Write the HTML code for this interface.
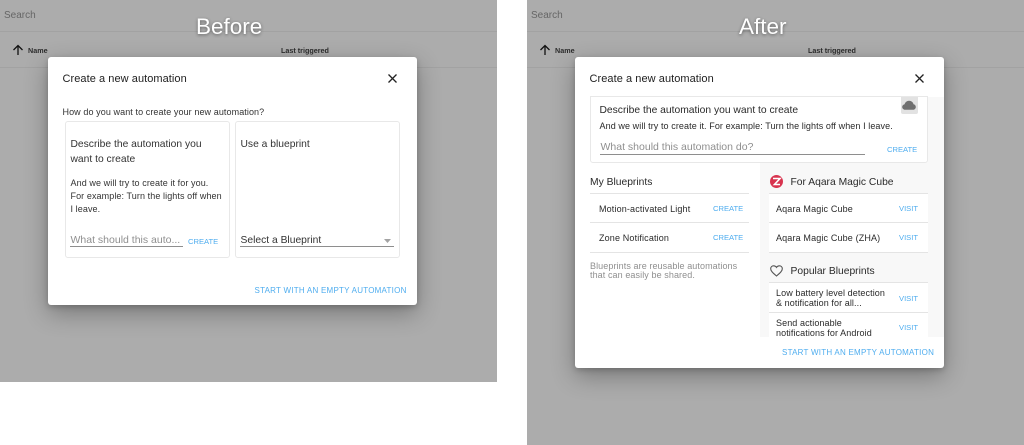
<!DOCTYPE html>
<html><head><meta charset="utf-8">
<style>
html,body{margin:0;padding:0;background:#fff;width:1024px;height:445px;overflow:hidden}
body{position:relative;font-family:"Liberation Sans",sans-serif;color:#212121}
.a{position:absolute}
.t{position:absolute;white-space:nowrap;line-height:14px;height:14px}
.bg{position:absolute;background:#acacac;overflow:hidden}
.hl{position:absolute;height:1px;background:#a2a2a2}
.dlg{position:absolute;background:#fff;border-radius:3px;box-shadow:0 8px 24px rgba(0,0,0,.3),0 2px 6px rgba(0,0,0,.18)}
.card{position:absolute;background:#fff;border:1px solid #e8e8e8;border-radius:3px;box-sizing:border-box}
.title{font-size:11px;letter-spacing:.06px;color:#212121}
.body{font-size:9px;letter-spacing:.09px;color:#333}
.h{font-size:10.3px;letter-spacing:0;color:#333}
.btn{font-size:8px;letter-spacing:.24px;color:#4fade f}
.btn{color:#4fadef}
.sm{font-size:7.6px;letter-spacing:0;color:#4fadef}
.hint{font-size:10.5px;letter-spacing:0;color:#8f8f8f}
.b{font-weight:bold;font-size:7.2px;color:#2c2c2c}
.big{font-size:22.500px;color:#fff;letter-spacing:0;line-height:28px;text-shadow:0 1px 3px rgba(0,0,0,.45);height:28px}
.s{font-size:10px;color:#666}
.line{position:absolute;height:1px;background:#e4e4e4}
.ul{position:absolute;height:1px;background:#8e8e8e}
</style></head><body>

<div class="bg" style="left:0;top:0;width:497px;height:382px"></div>
<div class="bg" style="left:527px;top:0;width:497px;height:445px"></div>
<div class="hl" style="left:0;top:31px;width:497px"></div>
<div class="hl" style="left:0;top:67px;width:497px"></div>
<div class="hl" style="left:527px;top:31px;width:497px"></div>
<div class="hl" style="left:527px;top:67px;width:497px"></div>

<div class="t s" style="left:4px;top:8.500px">Search</div>
<svg class="a" style="left:12px;top:44px" width="12" height="12" viewBox="0 0 12 12"><path d="M6 11V1.500M1.500 6L6 1.500 10.500 6" fill="none" stroke="#111" stroke-width="1.300"/></svg>
<div class="t b" style="left:28px;top:43.500px">Name</div>
<div class="t b" style="left:281px;top:43.500px">Last triggered</div>
<div class="t big" style="left:196px;top:13px">Before</div>

<div class="t s" style="left:531px;top:8.500px">Search</div>
<svg class="a" style="left:539px;top:44px" width="12" height="12" viewBox="0 0 12 12"><path d="M6 11V1.500M1.500 6L6 1.500 10.500 6" fill="none" stroke="#111" stroke-width="1.300"/></svg>
<div class="t b" style="left:555px;top:43.500px">Name</div>
<div class="t b" style="left:808px;top:43.500px">Last triggered</div>
<div class="t big" style="left:739px;top:13px">After</div>

<!-- Before dialog -->
<div class="dlg" style="left:48px;top:57px;width:369px;height:248px"></div>
<div class="t title" style="left:62.500px;top:72px">Create a new automation</div>
<svg class="a" style="left:387px;top:72.500px" width="11" height="11" viewBox="0 0 11 11"><path d="M1.500 1.500L9.500 9.500M9.500 1.500L1.500 9.500" stroke="#222" stroke-width="1.300" fill="none"/></svg>
<div class="t body" style="left:62.500px;top:105px">How do you want to create your new automation?</div>

<div class="card" style="left:65px;top:121px;width:165px;height:137px"></div>
<div class="t h" style="left:70.500px;top:138px">Describe the automation you</div>
<div class="t h" style="left:70.500px;top:153px">want to create</div>
<div class="t body" style="left:70.500px;top:176px">And we will try to create it for you.</div>
<div class="t body" style="left:70.500px;top:188.500px">For example: Turn the lights off when</div>
<div class="t body" style="left:70.500px;top:201.500px">I leave.</div>
<div class="t hint" style="left:70.500px;top:233px">What should this auto...</div>
<div class="ul" style="left:70px;top:246px;width:113px"></div>
<div class="t sm" style="left:188px;top:235px">CREATE</div>

<div class="card" style="left:235px;top:121px;width:165px;height:137px"></div>
<div class="t h" style="left:240.500px;top:138px">Use a blueprint</div>
<div class="t h" style="left:240.500px;top:234px;color:#333">Select a Blueprint</div>
<div class="ul" style="left:240px;top:246px;width:154px"></div>
<svg class="a" style="left:384px;top:239px" width="7" height="4"><path d="M0 0H7L3.500 4Z" fill="#a3a3a3"/></svg>
<div class="t btn" style="left:254.500px;top:283.500px">START WITH AN EMPTY AUTOMATION</div>

<!-- After dialog -->
<div class="dlg" style="left:575px;top:57px;width:369px;height:311px"></div>
<div class="a" style="left:760px;top:97px;width:184px;height:240px;background:#f8f8f8"></div>
<div class="t title" style="left:589.500px;top:72px">Create a new automation</div>
<svg class="a" style="left:914px;top:72.500px" width="11" height="11" viewBox="0 0 11 11"><path d="M1.500 1.500L9.500 9.500M9.500 1.500L1.500 9.500" stroke="#222" stroke-width="1.300" fill="none"/></svg>

<div class="card" style="left:590px;top:96px;width:338px;height:67px;border-top-left-radius:0;border-top-right-radius:0"></div>
<div class="a" style="left:901px;top:97px;width:17px;height:17px;background:#e2e2e2;border-radius:0 0 2px 2px"></div>
<svg class="a" style="left:902px;top:100px" width="14" height="10" viewBox="0 0 14 10"><path d="M3.300 9.800C1.500 9.800.2 8.500.2 7c0-1.400 1-2.600 2.400-2.800C3.100 2.300 5 .8 7 .8c2.300 0 4.200 1.600 4.500 3.500 1.300.2 2.300 1.300 2.300 2.700 0 1.500-1.200 2.800-2.800 2.800z" fill="#6f6f6f"/></svg>
<div class="t h" style="left:599.500px;top:103.500px;color:#2a2a2a">Describe the automation you want to create</div>
<div class="t body" style="left:599.500px;top:119px;color:#2a2a2a">And we will try to create it. For example: Turn the lights off when I leave.</div>
<div class="t hint" style="left:600.500px;top:140px">What should this automation do?</div>
<div class="ul" style="left:600px;top:154px;width:265px"></div>
<div class="t sm" style="left:887px;top:143px">CREATE</div>

<div class="t h" style="left:590px;top:175.500px;color:#2a2a2a">My Blueprints</div>
<div class="line" style="left:590px;top:193px;width:159px"></div>
<div class="t body" style="left:599px;top:202px;color:#2a2a2a;letter-spacing:.15px">Motion-activated Light</div>
<div class="t sm" style="left:713px;top:202px">CREATE</div>
<div class="line" style="left:590px;top:222px;width:159px"></div>
<div class="t body" style="left:599px;top:231px;color:#2a2a2a;letter-spacing:.15px">Zone Notification</div>
<div class="t sm" style="left:713px;top:231px">CREATE</div>
<div class="line" style="left:590px;top:252px;width:159px"></div>
<div class="t body" style="left:590px;top:259px;color:#8f8f8f">Blueprints are reusable automations</div>
<div class="t body" style="left:590px;top:268px;color:#8f8f8f">that can easily be shared.</div>

<svg class="a" style="left:770px;top:175px" width="13" height="13" viewBox="0 0 13 13"><circle cx="6.500" cy="6.500" r="6.500" fill="#d8344f"/><path d="M3 3.500H10L4.500 9.500H10" fill="none" stroke="#fff" stroke-width="1.600"/></svg>
<div class="t h" style="left:790.500px;top:175.500px;color:#2a2a2a">For Aqara Magic Cube</div>
<div class="a" style="left:769px;top:194px;width:159px;height:58px;background:#fff"></div>
<div class="line" style="left:769px;top:193px;width:159px"></div>
<div class="t body" style="left:776px;top:202px;color:#2a2a2a;letter-spacing:.15px">Aqara Magic Cube</div>
<div class="t sm" style="left:899px;top:202px">VISIT</div>
<div class="line" style="left:769px;top:222px;width:159px"></div>
<div class="t body" style="left:776px;top:231px;color:#2a2a2a;letter-spacing:.15px">Aqara Magic Cube (ZHA)</div>
<div class="t sm" style="left:899px;top:231px">VISIT</div>
<div class="line" style="left:769px;top:252px;width:159px"></div>

<svg class="a" style="left:770px;top:265px" width="13" height="12" viewBox="0 0 13 12"><path d="M6.500 11C2.500 7.600.7 5.900.7 3.700.7 2 2 .8 3.600.8c1.200 0 2.300.6 2.900 1.600C7.100 1.400 8.200.8 9.400.8 11 .8 12.300 2 12.300 3.700c0 2.200-1.800 3.900-5.800 7.300z" fill="none" stroke="#555" stroke-width="1.100"/></svg>
<div class="t h" style="left:790.500px;top:265px;color:#2a2a2a">Popular Blueprints</div>
<div class="a" style="left:769px;top:283px;width:159px;height:54px;background:#fff"></div>
<div class="line" style="left:769px;top:282px;width:159px"></div>
<div class="t body" style="left:776px;top:286px;color:#2a2a2a">Low battery level detection</div>
<div class="t body" style="left:776px;top:296px;color:#2a2a2a">&amp; notification for all...</div>
<div class="t sm" style="left:899px;top:291.500px">VISIT</div>
<div class="line" style="left:769px;top:312px;width:159px"></div>
<div class="t body" style="left:776px;top:315.500px;color:#2a2a2a">Send actionable</div>
<div class="t body" style="left:776px;top:325.500px;color:#2a2a2a;height:11.500px;overflow:hidden">notifications for Android</div>
<div class="t sm" style="left:899px;top:320.500px">VISIT</div>
<div class="t btn" style="left:782px;top:346px">START WITH AN EMPTY AUTOMATION</div>

</body></html>
